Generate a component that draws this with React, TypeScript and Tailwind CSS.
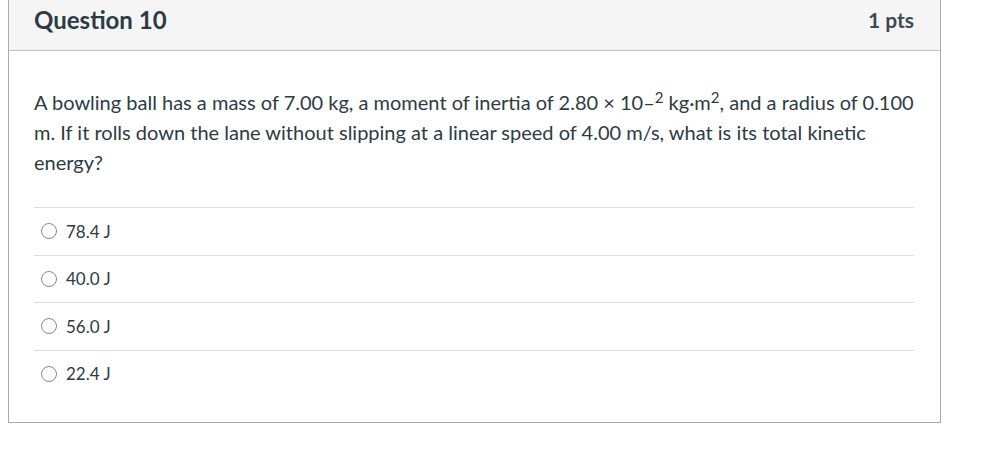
const answers = ["78.4 J", "40.0 J", "56.0 J", "22.4 J"];

export default function App() {
  return (
    <div className="w-[997px] h-[469px] bg-white pl-2 font-['Lato','Liberation_Sans',sans-serif] text-[#2d3b45]">
      <div className="w-[933px] h-[423px] border border-t-0 border-[#a9a9a9] flex flex-col">
        <div className="h-[51px] bg-[#f5f5f5] border-b border-[#c1c1c1] flex items-start justify-between pl-[25px] pr-[26px]">
          <h2 className="text-[24px] font-bold leading-[40px]">Question 10</h2>
          <span className="text-[21px] font-bold leading-[40px] text-[#3d4b55]">1 pts</span>
        </div>
        <div className="pl-[25px] pr-[24px] pt-[36px]">
          <p className="text-[20px] leading-[30px]">
            A bowling ball has a mass of 7.00 kg, a moment of inertia of 2.80 × 10–<sup className="text-[15px] leading-none">2</sup> kg·m<sup className="text-[15px] leading-none">2</sup>, and a radius of 0.100 m. If it rolls down the lane without slipping at a linear speed of 4.00 m/s, what is its total kinetic energy?
          </p>
          <div className="mt-[30px] mr-[2px]">
            {answers.map((a) => (
              <label key={a} className="h-[47.5px] border-t border-[#dcdcdc] flex items-center gap-[9px] pl-[7px]">
                <span className="w-[16px] h-[16px] rounded-full border border-[#8a8a8a] bg-white" />
                <span className="text-[17px]">{a}</span>
              </label>
            ))}
          </div>
        </div>
      </div>
    </div>
  );
}
